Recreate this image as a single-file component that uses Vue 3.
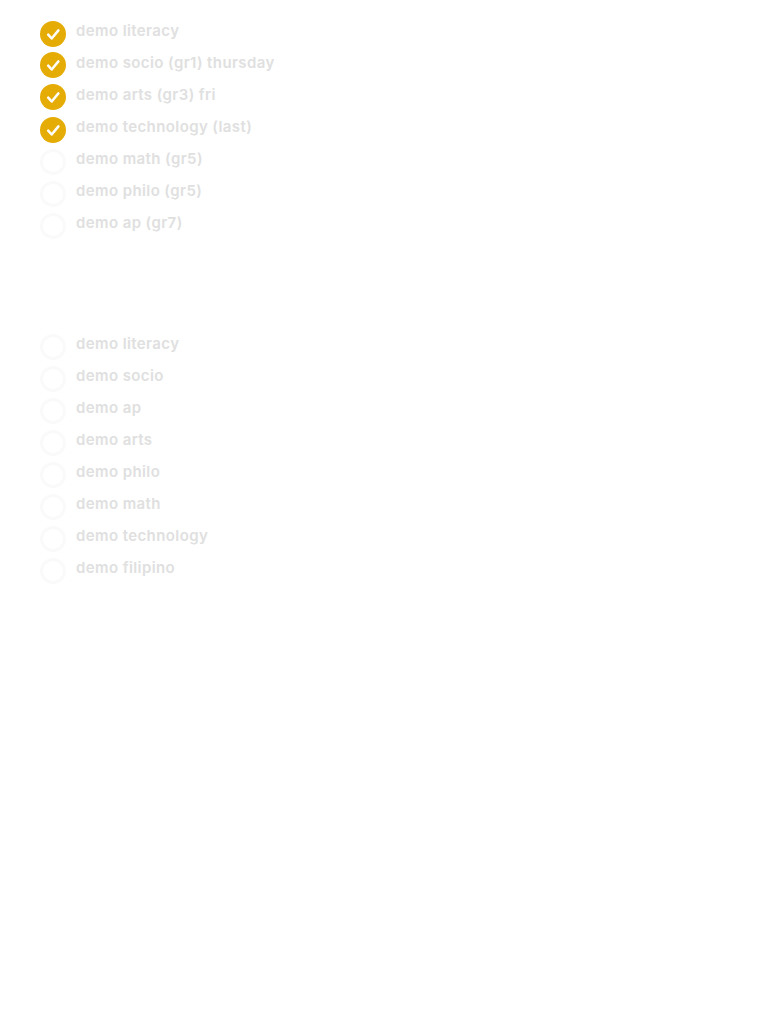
<script setup>
const firstList = [
  { name: 'demo literacy', done: true },
  { name: 'demo socio (gr1) thursday', done: true },
  { name: 'demo arts (gr3) fri', done: true },
  { name: 'demo technology (last)', done: true },
  { name: 'demo math (gr5)', done: false },
  { name: 'demo philo (gr5)', done: false },
  { name: 'demo ap (gr7)', done: false }
]

const secondList = [
  'demo literacy',
  'demo socio',
  'demo ap',
  'demo arts',
  'demo philo',
  'demo math',
  'demo technology',
  'demo filipino'
].map((name) => ({ name, done: false }))

const lists = [firstList, secondList]
</script>

<template>
  <div class="page">
    <ul v-for="(list, i) in lists" :key="i" class="list">
      <li v-for="item in list" :key="item.name" class="row">
        <span class="circle" :class="{ done: item.done }">
          <svg v-if="item.done" viewBox="0 0 26 26" width="26" height="26">
            <path d="M8.2 13.6l3.5 3.9L18.4 9.4" fill="none" stroke="#ffffff" stroke-width="2.5" stroke-linecap="round" stroke-linejoin="round" />
          </svg>
        </span>
        <span class="name">{{ item.name }}</span>
      </li>
    </ul>
  </div>
</template>

<style>
body {
  background: #ffffff;
}
</style>

<style scoped>
.page {
  display: flex;
  flex-direction: column;
  gap: 89px;
  padding: 15px 0 0 40px;
  font-family: Inter, "Liberation Sans", sans-serif;
}

.list {
  list-style: none;
  margin: 0;
  padding: 0;
}

.row {
  display: flex;
  gap: 10px;
  height: 32px;
}

.circle {
  flex: none;
  box-sizing: border-box;
  width: 26px;
  height: 26px;
  margin-top: 6px;
  border: 3px solid #fafafa;
  border-radius: 50%;
}

.circle.done {
  border: none;
  background: #e6ac06;
}

.row:nth-child(2) .circle.done,
.row:nth-child(3) .circle.done {
  margin-top: 5px;
}

.circle svg {
  display: block;
}

.name {
  font-size: 15px;
  font-weight: 600;
  line-height: 32px;
  color: #e0e0e0;
  letter-spacing: 0.4px;
}
</style>
